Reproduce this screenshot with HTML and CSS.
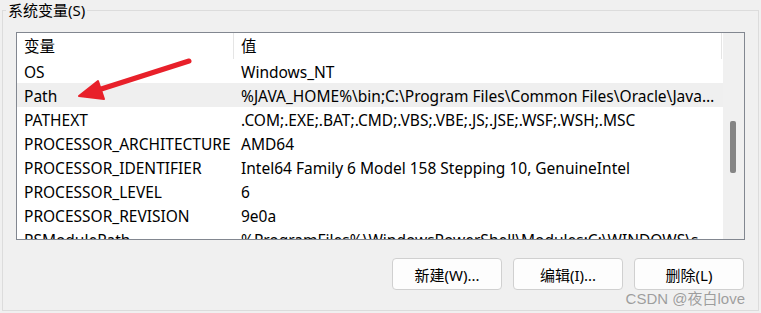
FILE: index.html
```html
<!DOCTYPE html>
<html>
<head>
  <meta charset="UTF-8">
  <title>系统变量</title>
  <link rel="stylesheet" href="styles.css">
</head>
<body>
  <fieldset class="group">
    <legend>系统变量(S)</legend>

    <div class="list">
      <div class="table">
        <div class="head">
          <div class="cell name">变量</div>
          <div class="cell value">值</div>
        </div>
        <div class="row">
          <div class="cell name">OS</div>
          <div class="cell value">Windows_NT</div>
        </div>
        <div class="row selected">
          <div class="cell name">Path</div>
          <div class="cell value">%JAVA_HOME%\bin;C:\Program Files\Common Files\Oracle\Java\javapath;C:\WINDOWS\system32</div>
        </div>
        <div class="row">
          <div class="cell name">PATHEXT</div>
          <div class="cell value">.COM;.EXE;.BAT;.CMD;.VBS;.VBE;.JS;.JSE;.WSF;.WSH;.MSC</div>
        </div>
        <div class="row">
          <div class="cell name">PROCESSOR_ARCHITECTURE</div>
          <div class="cell value">AMD64</div>
        </div>
        <div class="row">
          <div class="cell name">PROCESSOR_IDENTIFIER</div>
          <div class="cell value">Intel64 Family 6 Model 158 Stepping 10, GenuineIntel</div>
        </div>
        <div class="row">
          <div class="cell name">PROCESSOR_LEVEL</div>
          <div class="cell value">6</div>
        </div>
        <div class="row">
          <div class="cell name">PROCESSOR_REVISION</div>
          <div class="cell value">9e0a</div>
        </div>
        <div class="row">
          <div class="cell name">PSModulePath</div>
          <div class="cell value">%ProgramFiles%\WindowsPowerShell\Modules;C:\WINDOWS\system32</div>
        </div>
      </div>
      <div class="scrollbar">
        <div class="thumb"></div>
      </div>
    </div>

    <div class="btn-group">
      <button>新建(W)...</button>
      <button>编辑(I)...</button>
      <button>删除(L)</button>
    </div>
  </fieldset>

  <!-- 标注箭头 -->
  <svg class="arrow" width="761" height="313" viewBox="0 0 761 313">
    <line x1="189" y1="61" x2="95" y2="91" stroke="#e8202a" stroke-width="5" stroke-linecap="round"/>
    <polygon points="79,96 98,81 104,99" fill="#e8202a" stroke="#e8202a" stroke-width="2" stroke-linejoin="round"/>
  </svg>

  <div class="watermark">CSDN @夜白love</div>
</body>
</html>
```

FILE: styles.css
```css
body {
  margin: 0;
  width: 761px;
  height: 313px;
  background-color: #f0f0f0;
  font-family: "Segoe UI", "Noto Sans", "Noto Sans CJK SC", sans-serif;
  font-size: 15px;
  color: #000;
  position: relative;
  overflow: hidden;
}
.group {
  margin: 0 0 0 2px;
  padding: 0;
  width: 757px;
  height: 311px;
  border: 1px solid #dcdcdc;
  box-sizing: border-box;
}
.group legend {
  margin-left: 3px;
  padding: 0 2px;
  line-height: 20px;
  height: 20px;
}
.list {
  display: flex;
  margin: 12px 0 0 13px;
  width: 729px;
  height: 208px;
  border: 1px solid #828790;
  box-sizing: border-box;
  background-color: white;
}
.table {
  width: 706px;
  overflow: hidden;
  font-size: 15.5px;
}
.head, .row {
  display: grid;
  grid-template-columns: 217px 1fr;
}
.head {
  height: 26px;
  line-height: 26px;
}
.head .name {
  border-right: 1px solid #e5e5e5;
}
.head .value {
  border-right: 1px solid #e5e5e5;
  margin-right: 1px;
}
.row {
  height: 24px;
  box-sizing: border-box;
  padding-top: 2px;
  line-height: 22px;
}
.row.selected {
  background-color: #efefef;
}
.cell {
  padding-left: 7px;
  white-space: nowrap;
  overflow: hidden;
}
.row .value {
  text-overflow: ellipsis;
  padding-right: 8px;
}
.scrollbar {
  width: 21px;
  background-color: #f0f0f0;
  position: relative;
}
.thumb {
  position: absolute;
  left: 7px;
  top: 88px;
  width: 6px;
  height: 52px;
  background-color: #858585;
  border-radius: 2px;
}
.btn-group {
  display: flex;
  justify-content: flex-end;
  gap: 11px;
  margin: 18px 14px 0 0;
}
button {
  width: 110px;
  height: 32px;
  border: 1px solid #d0d0d0;
  border-radius: 4px;
  background-color: #fdfdfd;
  font-family: inherit;
  font-size: 15px;
  color: #000;
  padding: 0;
}
.arrow {
  position: absolute;
  left: 0;
  top: 0;
}
.watermark {
  position: absolute;
  right: 16px;
  top: 287px;
  font-family: "Liberation Sans", "Noto Sans CJK SC", sans-serif;
  font-size: 15px;
  color: rgba(130, 130, 130, 0.75);
}
```
